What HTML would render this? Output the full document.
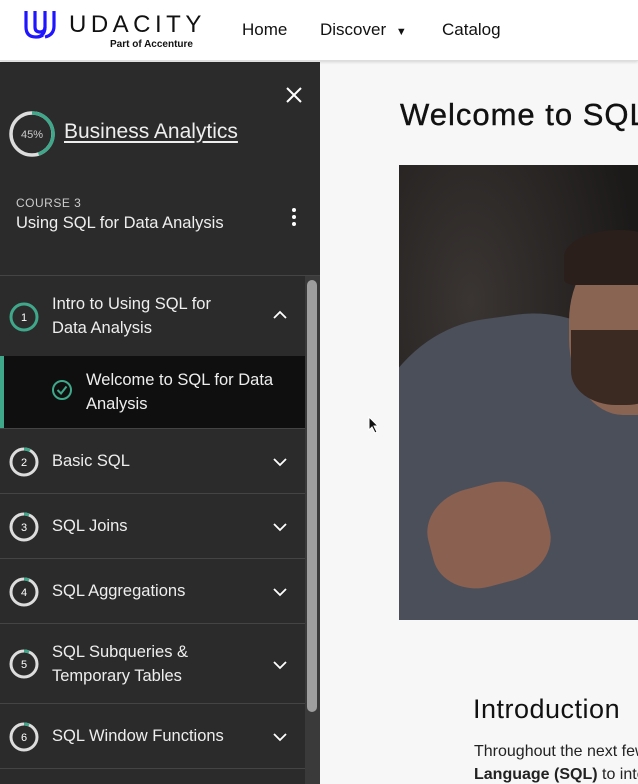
<!DOCTYPE html>
<html><head><style>
*{margin:0;padding:0;box-sizing:border-box}
body{width:638px;height:784px;overflow:hidden;background:#f7f7f7;font-family:"Liberation Sans","DejaVu Sans",sans-serif;position:relative}
.hdr{position:absolute;left:0;top:0;width:638px;height:61px;background:#fff;border-bottom:1px solid #ddd;box-shadow:0 1px 3px rgba(0,0,0,.15);z-index:3}
.nav{position:absolute;top:20px;font-size:17px;color:#111}
.side{position:absolute;left:0;top:62px;width:320px;height:722px;background:#2b2b2b;color:#fff;overflow:hidden}
.row{position:absolute;left:0;width:305px;border-top:1px solid #444;background:#2b2b2b}
.row .t{position:absolute;left:52px;font-size:16.5px;line-height:24px;color:#eee}
.row svg.c{position:absolute;left:9px}
.chev{position:absolute;left:272px}
</style></head><body>
<div class="hdr">
<svg style="position:absolute;left:23px;top:8px" width="34" height="32" viewBox="0 0 34 32"><path d="M3 3 V19 Q3 29 13 29 Q17 29 20 27" fill="none" stroke="#2015ff" stroke-width="3.2"/><path d="M12 3 V19 Q12 24 17 24 Q22 24 22 19 V3" fill="none" stroke="#2015ff" stroke-width="3.2"/><path d="M22 19 Q22 27 15 29 M31 3 V18 Q31 27 22 29" fill="none" stroke="#2015ff" stroke-width="3.2"/></svg>
<div style="position:absolute;left:69px;top:11px;font-size:24px;letter-spacing:4.5px;color:#111">UDACITY</div>
<div style="position:absolute;left:110px;top:39px;font-size:10px;color:#111;font-weight:bold">Part of Accenture</div>
<div class="nav" style="left:242px">Home</div>
<div class="nav" style="left:320px">Discover <span style="font-size:11px;margin-left:5px">▼</span></div>
<div class="nav" style="left:442px">Catalog</div>
</div>

<div style="position:absolute;left:400px;top:97px;font-size:31px;color:#111;white-space:nowrap;letter-spacing:1px;-webkit-text-stroke:0.4px #111">Welcome to SQL for Data</div>
<div style="position:absolute;left:399px;top:165px;width:239px;height:455px;background:radial-gradient(ellipse at 30% 30%,#3a3533,#1c1a19 70%);overflow:hidden">
<div style="position:absolute;left:-40px;top:150px;width:340px;height:420px;border-radius:45% 45% 0 0;background:#4b4f5a;transform:rotate(-8deg)"></div>
<div style="position:absolute;left:170px;top:80px;width:120px;height:170px;border-radius:45%;background:#8a6452"></div>
<div style="position:absolute;left:165px;top:65px;width:110px;height:55px;border-radius:50% 50% 10% 10%;background:#2a1f1a"></div>
<div style="position:absolute;left:172px;top:165px;width:100px;height:75px;border-radius:0 0 45% 45%;background:#3a2a22"></div>
<div style="position:absolute;left:30px;top:320px;width:120px;height:100px;border-radius:40%;background:#8a6050;transform:rotate(-15deg)"></div>
</div>
<div style="position:absolute;left:473px;top:694px;font-size:27px;color:#111;letter-spacing:.5px">Introduction</div>
<div style="position:absolute;left:474px;top:743px;font-size:16px;color:#222;white-space:nowrap">Throughout the next few</div>
<div style="position:absolute;left:474px;top:766px;font-size:16px;color:#222;white-space:nowrap"><b>Language (SQL)</b> to interact</div>
<svg style="position:absolute;left:368px;top:416px" width="12" height="18" viewBox="0 0 12 18"><path d="M1 1 L1 14 L4 11 L7 17 L9 16 L6 10 L10 10 Z" fill="#111" stroke="#fff" stroke-width="1"/></svg>

<div class="side">
<svg style="position:absolute;left:285px;top:24px" width="18" height="18"><path d="M2 2L16 16M16 2L2 16" stroke="#fff" stroke-width="2"/></svg>
<svg style="position:absolute;left:8px;top:48px" width="48" height="48" viewBox="0 0 48 48"><circle cx="24" cy="24" r="21" fill="none" stroke="#ddd" stroke-width="3.5"/><path d="M24 3 A21 21 0 0 1 30.5 44" fill="none" stroke="#3fa78a" stroke-width="3.5"/><text x="24" y="28" font-size="11" fill="#ccc" text-anchor="middle" font-family="Liberation Sans">45%</text></svg>
<div style="position:absolute;left:64px;top:58px;font-size:21px;color:#eee;text-decoration:underline;text-underline-offset:3px">Business Analytics</div>
<div style="position:absolute;left:16px;top:134px;font-size:12px;color:#ccc;letter-spacing:.5px">COURSE 3</div>
<div style="position:absolute;left:16px;top:152px;font-size:16.5px;color:#eee">Using SQL for Data Analysis</div>
<div style="position:absolute;left:292px;top:146px;width:5px">
<div style="width:4px;height:4px;background:#fff;border-radius:50%;margin-bottom:3px"></div><div style="width:4px;height:4px;background:#fff;border-radius:50%;margin-bottom:3px"></div><div style="width:4px;height:4px;background:#fff;border-radius:50%"></div></div>
<div style="position:absolute;left:0;top:213px;width:320px;height:1px;background:#444"></div>
<div style="position:absolute;left:305px;top:214px;width:15px;height:508px;background:#3a3a3a"></div>
<div style="position:absolute;left:307px;top:218px;width:10px;height:432px;background:#9e9e9e;border-radius:5px"></div>

<div class="row" style="top:214px;height:80px;border-top:none">
<svg class="c" style="top:26px" width="30" height="30"><circle cx="15" cy="15" r="13" fill="none" stroke="#3fa78a" stroke-width="3"/><text x="15" y="19" font-size="11" fill="#fff" text-anchor="middle" font-family="Liberation Sans">1</text></svg>
<div class="t" style="top:16px">Intro to Using SQL for<br>Data Analysis</div>
<svg class="chev" style="top:34px" width="16" height="10"><path d="M2 8L8 2L14 8" fill="none" stroke="#fff" stroke-width="1.8"/></svg>
</div>
<div class="row" style="top:294px;height:72px;background:#0f0f0f;border-top:none">
<div style="position:absolute;left:0;top:0;width:4px;height:72px;background:#3fa78a"></div>
<svg style="position:absolute;left:51px;top:23px" width="22" height="22"><circle cx="11" cy="11" r="9" fill="none" stroke="#3fa78a" stroke-width="2"/><path d="M6.5 11L10 14.5L15.5 7.5" fill="none" stroke="#3fa78a" stroke-width="2"/></svg>
<div class="t" style="left:86px;top:12px">Welcome to SQL for Data<br>Analysis</div>
</div>
<div class="row" style="top:366px;height:65px">
<svg class="c" style="top:18px" width="30" height="30"><circle cx="15" cy="15" r="13" fill="none" stroke="#ddd" stroke-width="3"/><path d="M15 2A13 13 0 0 1 21 3.5" fill="none" stroke="#3fa78a" stroke-width="3"/><text x="15" y="19" font-size="11" fill="#fff" text-anchor="middle" font-family="Liberation Sans">2</text></svg>
<div class="t" style="top:20px">Basic SQL</div>
<svg class="chev" style="top:28px" width="16" height="10"><path d="M2 2L8 8L14 2" fill="none" stroke="#fff" stroke-width="1.8"/></svg>
</div>
<div class="row" style="top:431px;height:65px">
<svg class="c" style="top:18px" width="30" height="30"><circle cx="15" cy="15" r="13" fill="none" stroke="#ddd" stroke-width="3"/><path d="M15 2A13 13 0 0 1 20 3" fill="none" stroke="#3fa78a" stroke-width="3"/><text x="15" y="19" font-size="11" fill="#fff" text-anchor="middle" font-family="Liberation Sans">3</text></svg>
<div class="t" style="top:20px">SQL Joins</div>
<svg class="chev" style="top:28px" width="16" height="10"><path d="M2 2L8 8L14 2" fill="none" stroke="#fff" stroke-width="1.8"/></svg>
</div>
<div class="row" style="top:496px;height:65px">
<svg class="c" style="top:18px" width="30" height="30"><circle cx="15" cy="15" r="13" fill="none" stroke="#ddd" stroke-width="3"/><path d="M15 2A13 13 0 0 1 20 3" fill="none" stroke="#3fa78a" stroke-width="3"/><text x="15" y="19" font-size="11" fill="#fff" text-anchor="middle" font-family="Liberation Sans">4</text></svg>
<div class="t" style="top:20px">SQL Aggregations</div>
<svg class="chev" style="top:28px" width="16" height="10"><path d="M2 2L8 8L14 2" fill="none" stroke="#fff" stroke-width="1.8"/></svg>
</div>
<div class="row" style="top:561px;height:80px">
<svg class="c" style="top:25px" width="30" height="30"><circle cx="15" cy="15" r="13" fill="none" stroke="#ddd" stroke-width="3"/><path d="M15 2A13 13 0 0 1 20 3" fill="none" stroke="#3fa78a" stroke-width="3"/><text x="15" y="19" font-size="11" fill="#fff" text-anchor="middle" font-family="Liberation Sans">5</text></svg>
<div class="t" style="top:16px">SQL Subqueries &amp;<br>Temporary Tables</div>
<svg class="chev" style="top:36px" width="16" height="10"><path d="M2 2L8 8L14 2" fill="none" stroke="#fff" stroke-width="1.8"/></svg>
</div>
<div class="row" style="top:641px;height:65px">
<svg class="c" style="top:18px" width="30" height="30"><circle cx="15" cy="15" r="13" fill="none" stroke="#ddd" stroke-width="3"/><path d="M15 2A13 13 0 0 1 20 3" fill="none" stroke="#3fa78a" stroke-width="3"/><text x="15" y="19" font-size="11" fill="#fff" text-anchor="middle" font-family="Liberation Sans">6</text></svg>
<div class="t" style="top:20px">SQL Window Functions</div>
<svg class="chev" style="top:28px" width="16" height="10"><path d="M2 2L8 8L14 2" fill="none" stroke="#fff" stroke-width="1.8"/></svg>
</div>
<div class="row" style="top:706px;height:16px"></div>
</div>
</body></html>
